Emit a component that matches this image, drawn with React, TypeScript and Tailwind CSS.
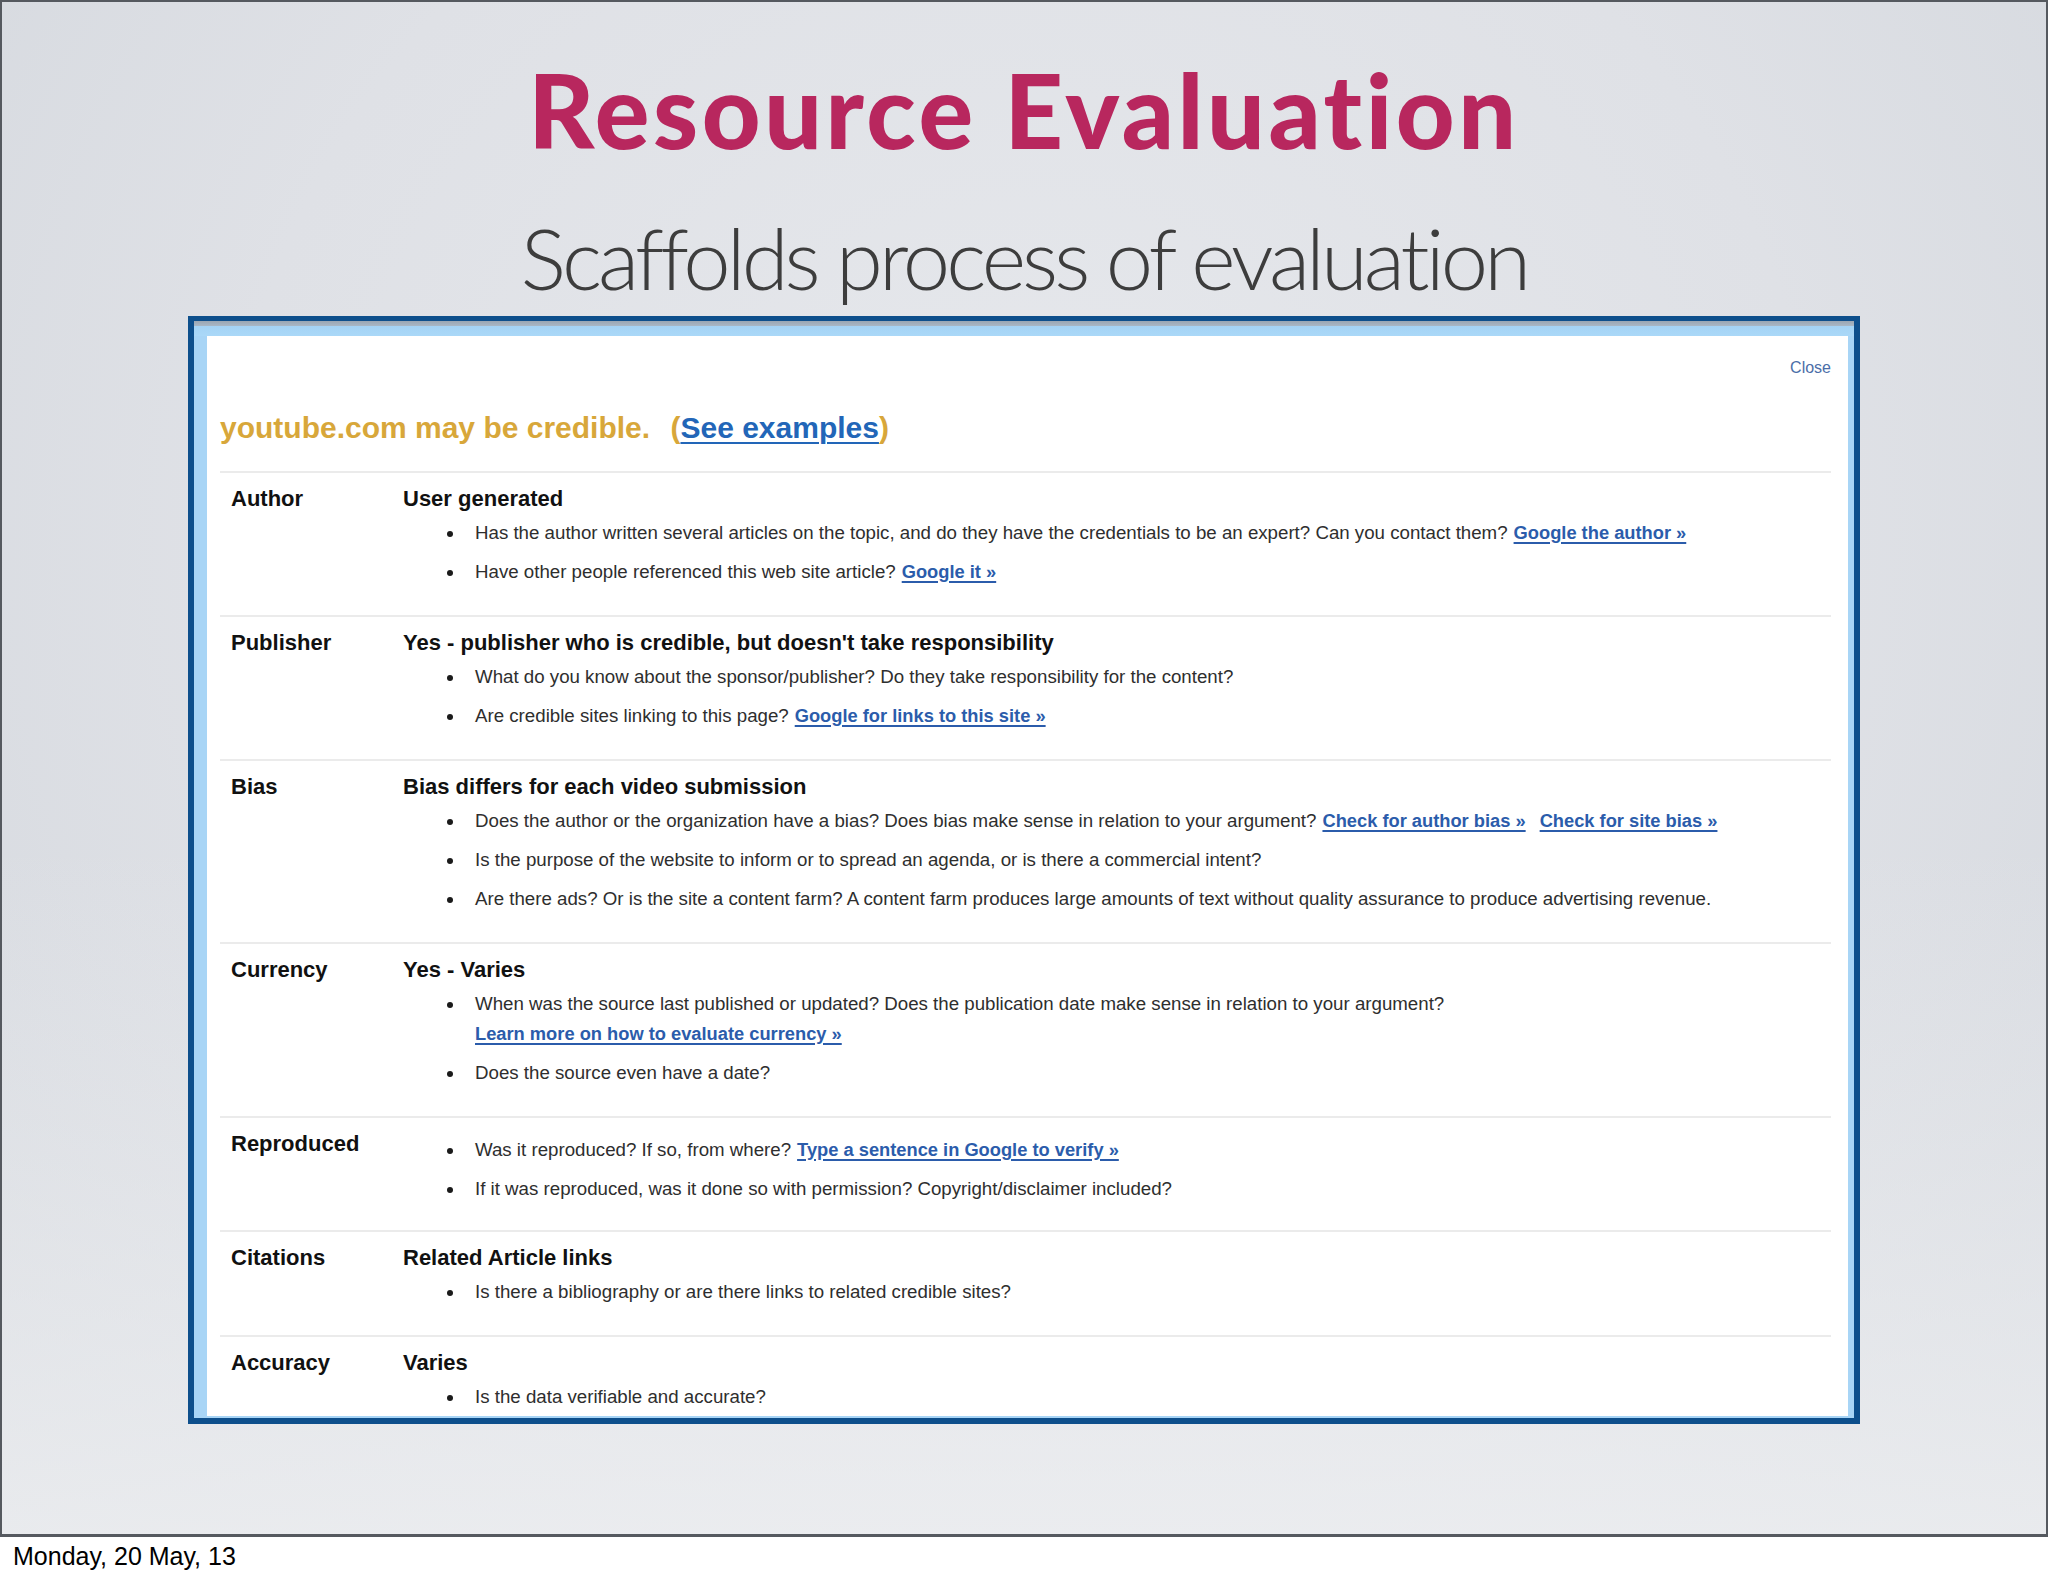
import React from "react"

type Bullet = { text?: string; links?: string[]; breakLink?: boolean }

interface Row {
  label: string
  value?: string
  bullets: Bullet[]
}

const rows: Row[] = [
  {
    label: "Author",
    value: "User generated",
    bullets: [
      {
        text: "Has the author written several articles on the topic, and do they have the credentials to be an expert? Can you contact them?",
        links: ["Google the author »"],
      },
      { text: "Have other people referenced this web site article?", links: ["Google it »"] },
    ],
  },
  {
    label: "Publisher",
    value: "Yes - publisher who is credible, but doesn't take responsibility",
    bullets: [
      { text: "What do you know about the sponsor/publisher? Do they take responsibility for the content?" },
      { text: "Are credible sites linking to this page?", links: ["Google for links to this site »"] },
    ],
  },
  {
    label: "Bias",
    value: "Bias differs for each video submission",
    bullets: [
      {
        text: "Does the author or the organization have a bias? Does bias make sense in relation to your argument?",
        links: ["Check for author bias »", "Check for site bias »"],
      },
      { text: "Is the purpose of the website to inform or to spread an agenda, or is there a commercial intent?" },
      {
        text: "Are there ads? Or is the site a content farm? A content farm produces large amounts of text without quality assurance to produce advertising revenue.",
      },
    ],
  },
  {
    label: "Currency",
    value: "Yes - Varies",
    bullets: [
      {
        text: "When was the source last published or updated? Does the publication date make sense in relation to your argument?",
        links: ["Learn more on how to evaluate currency »"],
        breakLink: true,
      },
      { text: "Does the source even have a date?" },
    ],
  },
  {
    label: "Reproduced",
    bullets: [
      { text: "Was it reproduced? If so, from where?", links: ["Type a sentence in Google to verify »"] },
      { text: "If it was reproduced, was it done so with permission? Copyright/disclaimer included?" },
    ],
  },
  {
    label: "Citations",
    value: "Related Article links",
    bullets: [{ text: "Is there a bibliography or are there links to related credible sites?" }],
  },
  {
    label: "Accuracy",
    value: "Varies",
    bullets: [{ text: "Is the data verifiable and accurate?" }],
  },
]

function BulletItem({ b }: { b: Bullet }) {
  return (
    <li className="flex py-[4.5px] leading-[30px]">
      <div className="flex h-[30px] w-[72px] shrink-0 items-center pl-[44px]">
        <div className="mt-[3px] h-[6px] w-[6px] rounded-full bg-[#1a1a1a]" />
      </div>
      <div className="text-[18.7px] text-[#2e2e2e]">
        {b.text}
        {b.breakLink && <br />}
        {b.links?.map((l, i) => (
          <a
            key={l}
            className={`${b.breakLink ? "" : "ml-[6px]"} ${i > 0 ? "ml-[14px]" : ""} text-[18.3px] font-bold text-[#2b5cab] underline decoration-[1.5px] underline-offset-[3px]`}
          >
            {l}
          </a>
        ))}
      </div>
    </li>
  )
}

function EvalRow({ row, last }: { row: Row; last: boolean }) {
  // rows without a heading line sit a touch tighter
  const pb = last ? "pb-0" : row.value ? "pb-[24px]" : "pb-[22px]"
  return (
    <div className={`flex border-t-2 border-[#ebebeb] pt-[12px] ${pb}`}>
      <div className="w-[183px] shrink-0 pl-[11px] text-[22px] font-bold leading-[28px] text-[#111]">
        {row.label}
      </div>
      <div className="flex-1">
        {row.value && <div className="text-[22px] font-bold leading-[28px] text-[#111]">{row.value}</div>}
        <ul>
          {row.bullets.map((b, i) => (
            <BulletItem key={i} b={b} />
          ))}
        </ul>
      </div>
    </div>
  )
}

export default function App() {
  return (
    <div className="h-[1576px] w-[2048px] overflow-hidden bg-white">
      <div className="flex h-[1537px] flex-col items-center border-x-2 border-t-2 border-b-[3px] border-[#55595f] bg-[linear-gradient(to_bottom,rgba(240,241,243,0)_55%,rgba(240,241,243,0.75)_100%),radial-gradient(ellipse_at_50%_35%,#e6e8ec_0%,#dfe1e6_55%,#d3d7dd_100%)]">
        <h1 className="mt-[57px] font-['Lato',sans-serif] text-[102px] font-black leading-none tracking-[3.6px] text-[#b8275e]">
          Resource Evaluation
        </h1>
        <h2 className="mt-[54px] font-['Lato',sans-serif] text-[85px] font-light leading-none tracking-[-3.9px] text-[#3d3d3d]">
          Scaffolds process of evaluation
        </h2>

        <div className="mt-[16px] w-[1672px] border-[6px] border-t-[5px] border-[#0d4f8c] font-['Liberation_Sans',Arial,sans-serif]">
          <div className="h-[15px] bg-[linear-gradient(to_bottom,#9aa6b3_0px,#a9b8c6_5px,#a4d3f5_5px,#aad8f8_15px)]" />
          <div className="border-l-[13px] border-r-[6px] border-b-[2px] border-[#a8d5f6] bg-white pt-[22px] pl-[13px] pr-[17px]">
            <div className="flex justify-end">
              <span className="text-[16px] leading-[20px] text-[#4b6ea8]">Close</span>
            </div>
            <div className="mt-[32px] text-[30px] font-bold leading-[36px] text-[#d8a73a]">
              youtube.com may be credible.{" "}
              <span className="ml-[12px]">
                (<a className="text-[#2266b8] underline decoration-2 underline-offset-[4px]">See examples</a>)
              </span>
            </div>
            <div className="mt-[25px]">
              {rows.map((r, i) => (
                <EvalRow key={r.label} row={r} last={i === rows.length - 1} />
              ))}
            </div>
          </div>
        </div>
      </div>
      <div className="pl-[13px] pt-[5px] font-['Liberation_Sans',Arial,sans-serif] text-[25px] leading-[28px] text-black">
        Monday, 20 May, 13
      </div>
    </div>
  )
}
